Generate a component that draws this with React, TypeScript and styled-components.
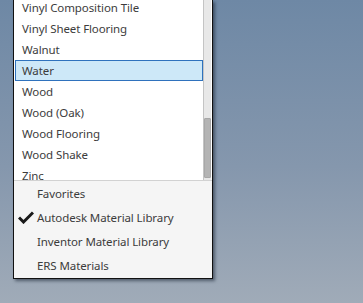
import { FC } from "react";
import styled, { createGlobalStyle } from "styled-components";

const GlobalStyle = createGlobalStyle`
  html, body {
    margin: 0;
    padding: 0;
    height: 100%;
  }
  body {
    background: linear-gradient(to bottom, #6e88a5 0%, #8597ad 55%, #a0abb8 100%);
    font-family: "Noto Sans", "Open Sans", sans-serif;
    overflow: hidden;
  }
`;

const Page = styled.div`
  width: 363px;
  height: 303px;
  padding-left: 13px;
  box-sizing: border-box;
`;

const Popup = styled.div`
  width: 200px;
  box-sizing: border-box;
  border: 1px solid #111;
  border-top: none;
  background: #f5f5f5;
  box-shadow: 2px 2px 3px rgba(20, 30, 45, 0.55);
`;

const ListArea = styled.div`
  display: flex;
  height: 180px;
  background: #fff;
  border-bottom: 1px solid #d2d2d2;
`;

const Items = styled.div`
  flex: 1;
  overflow: hidden;
  padding-left: 1px;
`;

const ItemsInner = styled.div`
  margin-top: -3px;
`;

const Row = styled.div<{ $selected?: boolean }>`
  height: 21px;
  box-sizing: border-box;
  display: flex;
  align-items: center;
  padding-left: 6px;
  font-size: 11.5px;
  letter-spacing: -0.1px;
  color: #3c3c3c;
  white-space: nowrap;
  background: ${(p) => (p.$selected ? "#cde8f8" : "transparent")};
  border: 1px solid ${(p) => (p.$selected ? "#2f72bd" : "transparent")};
`;

const Scrollbar = styled.div`
  width: 8px;
  margin-right: 1px;
  background: #e8e8e8;
  border-left: 1px solid #c4c4c4;
  display: flex;
  flex-direction: column;
  padding-top: 118px;
  padding-bottom: 2px;
  box-sizing: border-box;
`;

const Thumb = styled.div`
  flex: 1;
  background: #b4b4b4;
  border: 1px solid #a8a8a8;
  border-radius: 1px;
`;

const Libraries = styled.div`
  padding: 0 0 1px 0;
`;

const LibRow = styled.div`
  height: 24px;
  display: flex;
  align-items: center;
  font-size: 11.5px;
  letter-spacing: -0.1px;
  color: #3c3c3c;
  white-space: nowrap;
`;

const CheckCell = styled.span`
  width: 22px;
  display: flex;
  justify-content: center;
  padding-left: 1px;
`;

const materials = [
  "Vinyl Composition Tile",
  "Vinyl Sheet Flooring",
  "Walnut",
  "Water",
  "Wood",
  "Wood (Oak)",
  "Wood Flooring",
  "Wood Shake",
  "Zinc",
];

const libraries = [
  { name: "Favorites", checked: false },
  { name: "Autodesk Material Library", checked: true },
  { name: "Inventor Material Library", checked: false },
  { name: "ERS Materials", checked: false },
];

const Check: FC = () => (
  <svg width="16" height="13" viewBox="0 0 16 13">
    <path d="M1 6.5 L5.5 11 L15 1.5" fill="none" stroke="#1a1a1a" strokeWidth="3" />
  </svg>
);

const App: FC = () => {
  return (
    <Page>
      <GlobalStyle />
      <Popup>
        <ListArea>
          <Items>
            <ItemsInner>
              {materials.map((m) => (
                <Row key={m} $selected={m === "Water"}>
                  {m}
                </Row>
              ))}
            </ItemsInner>
          </Items>
          <Scrollbar>
            <Thumb />
          </Scrollbar>
        </ListArea>
        <Libraries>
          {libraries.map((l) => (
            <LibRow key={l.name}>
              <CheckCell>{l.checked && <Check />}</CheckCell>
              {l.name}
            </LibRow>
          ))}
        </Libraries>
      </Popup>
    </Page>
  );
};

export default App;
